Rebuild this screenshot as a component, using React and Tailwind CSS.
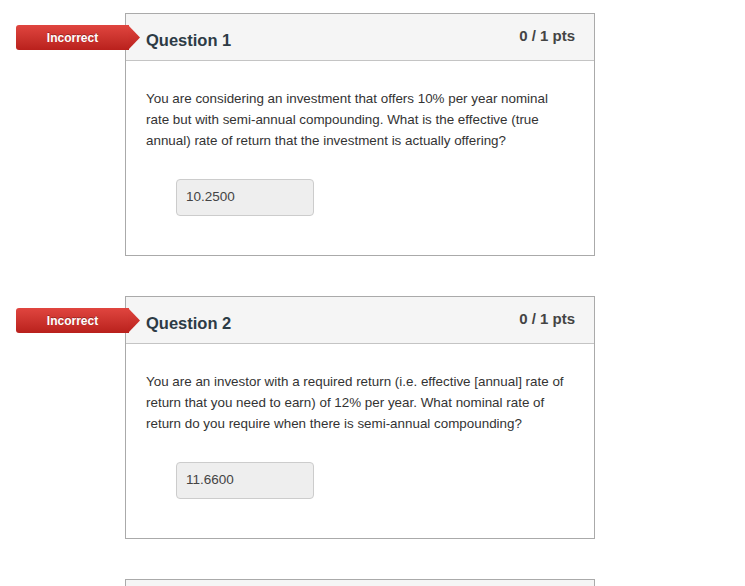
const questions = [
  {
    title: 'Question 1',
    lines: [
      'You are considering an investment that offers 10% per year nominal',
      'rate but with semi-annual compounding. What is the effective (true',
      'annual) rate of return that the investment is actually offering?',
    ],
    answer: '10.2500',
  },
  {
    title: 'Question 2',
    lines: [
      'You are an investor with a required return (i.e. effective [annual] rate of',
      'return that you need to earn) of 12% per year. What nominal rate of',
      'return do you require when there is semi-annual compounding?',
    ],
    answer: '11.6600',
  },
];

function Badge() {
  return (
    <div className="absolute left-[-110px] top-[11px] flex items-center">
      <div className="w-[113px] h-[25px] rounded-l-[3px] bg-gradient-to-b from-[#e0453f] to-[#b9201c] flex items-center justify-center text-white text-[12px] font-bold [text-shadow:0_-1px_0_rgba(0,0,0,0.3)]">
        Incorrect
      </div>
      <svg width="12" height="25" viewBox="0 0 12 25" className="-ml-px">
        <defs>
          <linearGradient id="bg" x1="0" y1="0" x2="0" y2="1">
            <stop offset="0" stopColor="#e0453f" />
            <stop offset="1" stopColor="#b9201c" />
          </linearGradient>
        </defs>
        <polygon points="0,0 12,12.5 0,25" fill="url(#bg)" />
      </svg>
    </div>
  );
}

function QuestionCard({ q }) {
  return (
    <div className="relative w-[470px] border border-[#aaa] bg-white">
      <Badge />
      <div className="h-[47px] bg-[#f5f5f5] border-b border-[#c4c4c4] flex justify-between pl-[20px] pr-[19px]">
        <div className="pt-[14px] text-[16.5px] font-bold text-[#2d3b45]">{q.title}</div>
        <div className="pt-[11px] text-[15px] font-bold text-[#444]">0 / 1 pts</div>
      </div>
      <div className="pl-[20px] pr-[20px] pt-[27px] pb-[39px]">
        <div className="text-[13.4px] leading-[21px] text-[#333]">
          {q.lines.map((l) => (
            <div key={l} className="whitespace-nowrap">{l}</div>
          ))}
        </div>
        <div className="mt-[28px] ml-[30px] w-[138px] h-[37px] rounded-[4px] border border-[#ccc] bg-[#eee] flex items-center pl-[9px] text-[13.5px] text-[#444]">
          {q.answer}
        </div>
      </div>
    </div>
  );
}

export default function App() {
  return (
    <div className="w-[745px] h-[586px] overflow-hidden bg-white font-['Liberation_Sans',Arial,sans-serif]">
      <div className="pl-[125px] pt-[13px] flex flex-col gap-[40px]">
        {questions.map((q) => (
          <QuestionCard key={q.title} q={q} />
        ))}
        <div className="w-[470px] h-[60px] border border-[#aaa] bg-[#f5f5f5]" />
      </div>
    </div>
  );
}
